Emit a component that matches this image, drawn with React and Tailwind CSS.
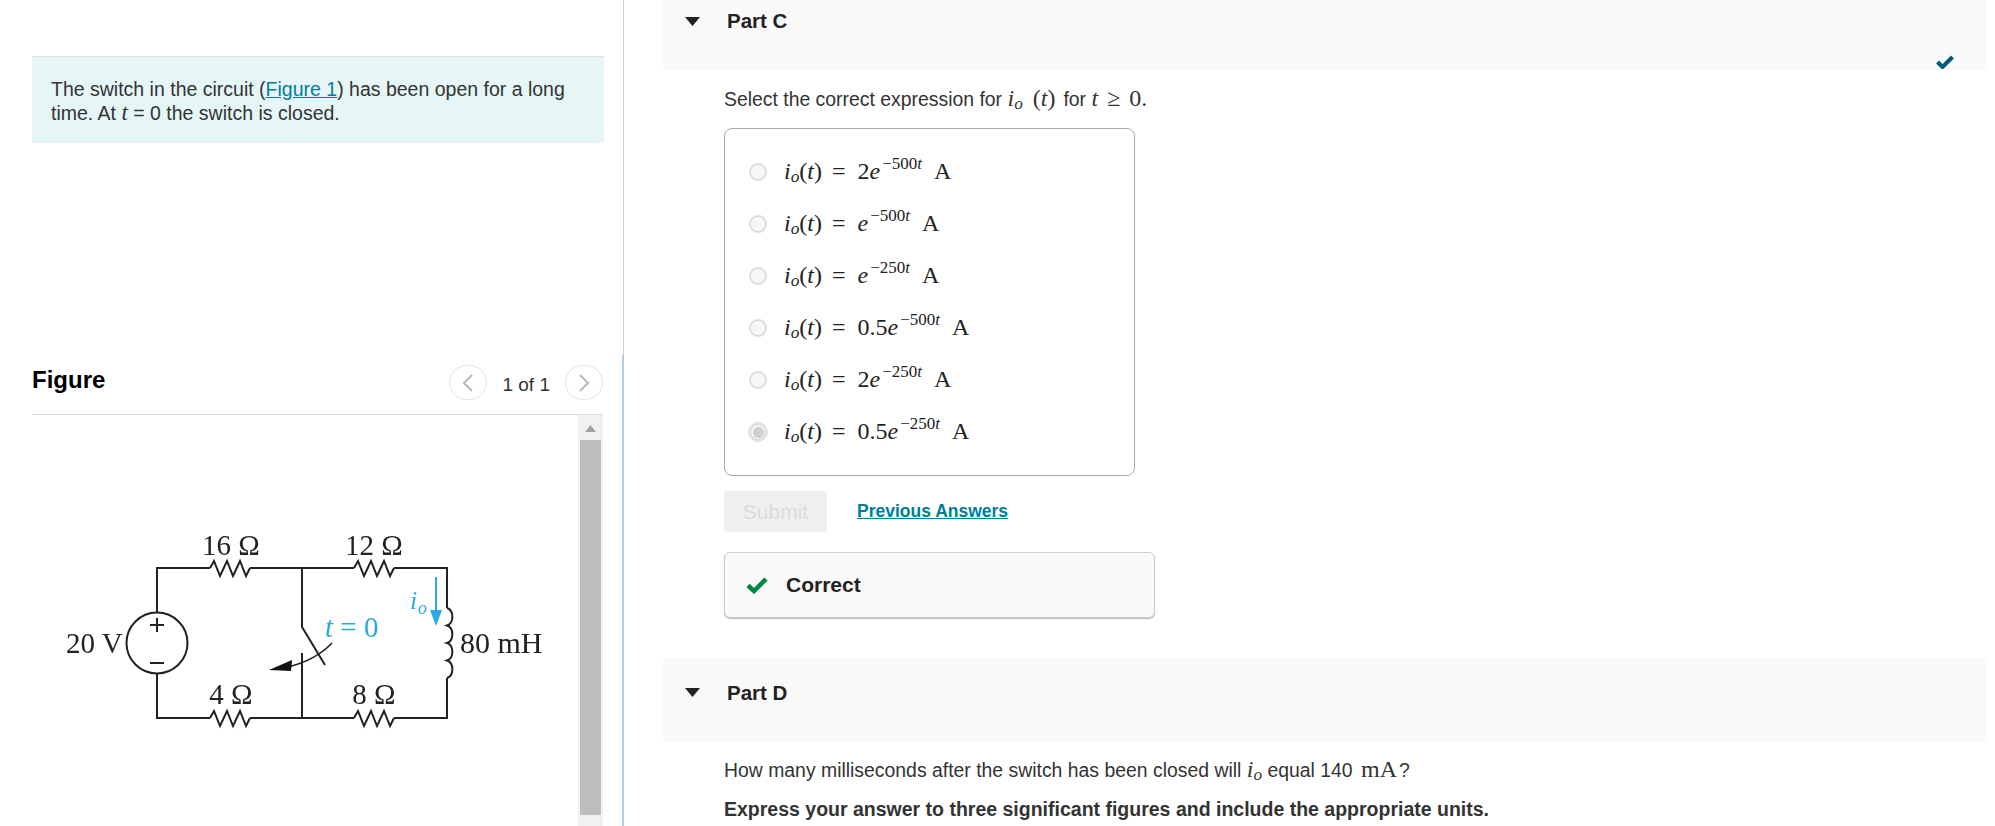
const sans = "font-['Liberation_Sans',Arial,sans-serif]";
const serif = "font-['Liberation_Serif',serif]";

function zigzag(x, y) {
  return `M${x} ${y} l4 -7 l6 15 l7 -15 l6 15 l7 -15 l6 15 l4 -8`;
}

function Circuit() {
  const text = "font-['Liberation_Serif',serif] fill-[#222] text-[29px]";
  const blue = "font-['Liberation_Serif',serif] fill-[#29abe2]";
  return (
    <svg viewBox="32 415 546 411" className="h-full w-[546px] blur-[0.35px]">
      <g fill="none" stroke="#222" strokeWidth="2">
        <path d="M157 612 V568 H210 M250 568 H354 M394 568 H447 V608" />
        <path d="M157 674 V718 H210 M250 718 H354 M394 718 H447 V678" />
        <path d={zigzag(210, 568)} />
        <path d={zigzag(354, 568)} />
        <path d={zigzag(210, 718)} />
        <path d={zigzag(354, 718)} />
        <circle cx="157" cy="643" r="30.5" />
        <path d="M302 568 V627 L325 665 M302 653 V718" />
        <path d="M447 608 a7 9 0 0 1 0 17.5 a7 9 0 0 1 0 17.5 a7 9 0 0 1 0 17.5 a7 9 0 0 1 0 17.5" />
        <path d="M150 625 H164 M157 618 V632 M150 663 H164" />
        <path d="M332 643 Q316 660 288 667" strokeWidth="1.6" />
      </g>
      <path d="M269 670 L292 660 L291 671 Z" fill="#111" />
      <path d="M436 577 V612" stroke="#29abe2" strokeWidth="2" fill="none" />
      <path d="M430 610 H442 L436 626 Z" fill="#29abe2" />
      <text x="231" y="555" textAnchor="middle" className={text}>16 Ω</text>
      <text x="374" y="555" textAnchor="middle" className={text}>12 Ω</text>
      <text x="231" y="704" textAnchor="middle" className={text}>4 Ω</text>
      <text x="374" y="704" textAnchor="middle" className={text}>8 Ω</text>
      <text x="66" y="653" className={text}>20 V</text>
      <text x="460" y="653" className="font-['Liberation_Serif',serif] fill-[#222] text-[30px]">80 mH</text>
      <text x="325" y="637" className={`${blue} text-[29px]`}><tspan fontStyle="italic">t</tspan> = 0</text>
      <text x="410" y="609" className={`${blue} text-[26px] italic`}>i</text>
      <text x="418" y="614" className={`${blue} text-[18px] italic`}>o</text>
    </svg>
  );
}

function Triangle() {
  return (
    <svg width="15" height="9" viewBox="0 0 15 9" className="shrink-0">
      <path d="M0 0 H15 L7.5 9 Z" fill="#222" />
    </svg>
  );
}

function Io() {
  return (
    <>
      <i>i</i>
      <i className="align-[-3px] text-[0.72em]">o</i>
    </>
  );
}

function Option({ coef, exponent, selected }) {
  return (
    <div className="flex h-[52px] items-center">
      <span
        className={`flex h-[18px] w-[18px] shrink-0 items-center justify-center rounded-full border-2 border-[#ddd] bg-[#f7f7f7] ${
          selected ? "outline outline-1 outline-[#ddd]" : ""
        }`}
      >
        {selected && <span className="h-[11px] w-[11px] rounded-full bg-[#cfcfcf]" />}
      </span>
      <span className={`ml-[17px] whitespace-nowrap pb-[4px] ${serif} text-[24px] leading-none text-[#222]`}>
        <Io />(<i>t</i>)<span className="ml-[10px] mr-[12px]">=</span>
        {coef}
        <i>e</i>
        <span className="ml-[2px] align-[10px] text-[17px]">
          −{exponent}
          <i>t</i>
        </span>
        <span className="ml-[12px]">A</span>
      </span>
    </div>
  );
}

const options = [
  { coef: "2", exponent: "500" },
  { coef: "", exponent: "500" },
  { coef: "", exponent: "250" },
  { coef: "0.5", exponent: "500" },
  { coef: "2", exponent: "250" },
  { coef: "0.5", exponent: "250", selected: true },
];

export default function App() {
  return (
    <div className={`flex h-[826px] w-[1995px] overflow-hidden bg-white ${sans}`}>
      <div className="flex w-[622px] shrink-0 flex-col pl-[32px]">
        <div className="mt-[56px] h-[87px] w-[572px] border-t border-[#dde3e3] bg-[#e6f6f7] px-[19px] pt-[20px] text-[19.5px] leading-[24px] text-[#333]">
          The switch in the circuit (<a className="text-[#007c9e] underline">Figure 1</a>) has been open for a long
          <br />
          time. At <i className={`${serif} text-[23px] leading-none`}>t</i> = 0 the switch is closed.
        </div>

        <div className="mt-[222px] flex h-[50px] w-[571px] items-start justify-between border-b border-[#dcdcdc]">
          <h2 className="text-[24px] leading-[30px] font-bold text-black">Figure</h2>
          <div className="flex items-center">
            <span className="flex h-[35px] w-[38px] items-center justify-center rounded-full border border-[#e5e5e5]">
              <svg width="12" height="20" viewBox="0 0 12 20" fill="none" stroke="#b9b9b9" strokeWidth="2">
                <path d="M10 2 L2 10 L10 18" />
              </svg>
            </span>
            <span className="mx-[15px] pt-[5px] text-[19px] text-[#333]">1 of 1</span>
            <span className="flex h-[35px] w-[38px] items-center justify-center rounded-full border border-[#e5e5e5]">
              <svg width="12" height="20" viewBox="0 0 12 20" fill="none" stroke="#b9b9b9" strokeWidth="2">
                <path d="M2 2 L10 10 L2 18" />
              </svg>
            </span>
          </div>
        </div>

        <div className="flex min-h-0 w-[571px] flex-1">
          <Circuit />
          <div className="flex w-[25px] flex-col items-center bg-[#f1f1f1]">
            <svg width="11" height="7" viewBox="0 0 11 7" className="mt-[10px] shrink-0">
              <path d="M0 7 H11 L5.5 0 Z" fill="#a3a3a3" />
            </svg>
            <div className="mt-[8px] h-[375px] w-[21px] bg-[#bdbdbd]" />
          </div>
        </div>
      </div>

      <div className="flex w-[2px] shrink-0 flex-col items-end">
        <div className="h-[355px] w-px bg-[#c5d4e2]" />
        <div className="w-[2px] flex-1 bg-[#b8cde0]" />
      </div>

      <div className="relative min-w-0 flex-1 pl-[39px] pr-[8px]">
        <div className="flex h-[70px] items-start bg-[#f9f9f9] pl-[22px] pt-[8px]">
          <span className="mt-[9px]"><Triangle /></span>
          <span className="ml-[27px] text-[20.5px] leading-[26px] font-bold text-[#222]">Part C</span>
        </div>
        <svg width="18" height="14" viewBox="0 0 18 14" className="absolute right-[41px] top-[55px]">
          <path d="M1.5 7 L6.5 12 L16.5 2" fill="none" stroke="#005a78" strokeWidth="4" />
        </svg>

        <div className="pl-[61px]">
          <p className="mt-[16px] h-[22px] whitespace-nowrap text-[19.4px] leading-[22px] text-[#333]">
            Select the correct expression for{" "}
            <span className={`${serif} text-[24px] leading-none`}>
              <Io />
              <span className="ml-[10px]">(</span>
              <i>t</i>)
            </span>
            <span className="ml-[8px]">for</span>{" "}
            <span className={`${serif} text-[24px] leading-none`}>
              <i>t</i>
              <span className="mx-[9px]">≥</span>0.
            </span>
          </p>

          <div className="mt-[20px] h-[348px] w-[411px] rounded-[8px] border border-[#aaa] pl-[24px] pt-[17px]">
            {options.map((option) => (
              <Option key={`${option.coef}-${option.exponent}`} {...option} />
            ))}
          </div>

          <div className="mt-[15px] flex h-[41px] items-center">
            <button
              type="button"
              className="h-[41px] w-[103px] rounded-[3px] bg-[#efefef] text-[21px] text-[#dcdcdc]"
            >
              Submit
            </button>
            <a className="ml-[30px] text-[17.5px] font-bold text-[#007c9e] underline">Previous Answers</a>
          </div>

          <div className="mt-[20px] flex h-[66px] w-[431px] items-center rounded-[6px] border border-[#ccc] bg-[#f9f9f9] pl-[21px] shadow-[0_1px_1px_#bbb]">
            <svg width="22" height="17" viewBox="0 0 22 17" className="shrink-0">
              <path d="M2 8.5 L8 14 L20 2" fill="none" stroke="#00883e" strokeWidth="4.5" />
            </svg>
            <span className="ml-[18px] text-[21px] font-bold text-[#222]">Correct</span>
          </div>
        </div>

        <div className="mt-[40px] flex h-[84px] items-start bg-[#f9f9f9] pl-[22px] pt-[22px]">
          <span className="mt-[8px]"><Triangle /></span>
          <span className="ml-[27px] text-[20.5px] leading-[26px] font-bold text-[#222]">Part D</span>
        </div>

        <div className="pl-[61px]">
          <p className="mt-[15px] h-[22px] whitespace-nowrap text-[19.4px] leading-[22px] text-[#333]">
            How many milliseconds after the switch has been closed will{" "}
            <span className={`${serif} text-[24px] leading-none`}><Io /></span> equal 140{" "}
            <span className={`${serif} ml-[3px] mr-[2px] text-[24px] leading-none`}>mA</span>?
          </p>
          <p className="mt-[19px] whitespace-nowrap text-[19.5px] leading-[22px] font-bold text-[#333]">
            Express your answer to three significant figures and include the appropriate units.
          </p>
        </div>
      </div>
    </div>
  );
}
